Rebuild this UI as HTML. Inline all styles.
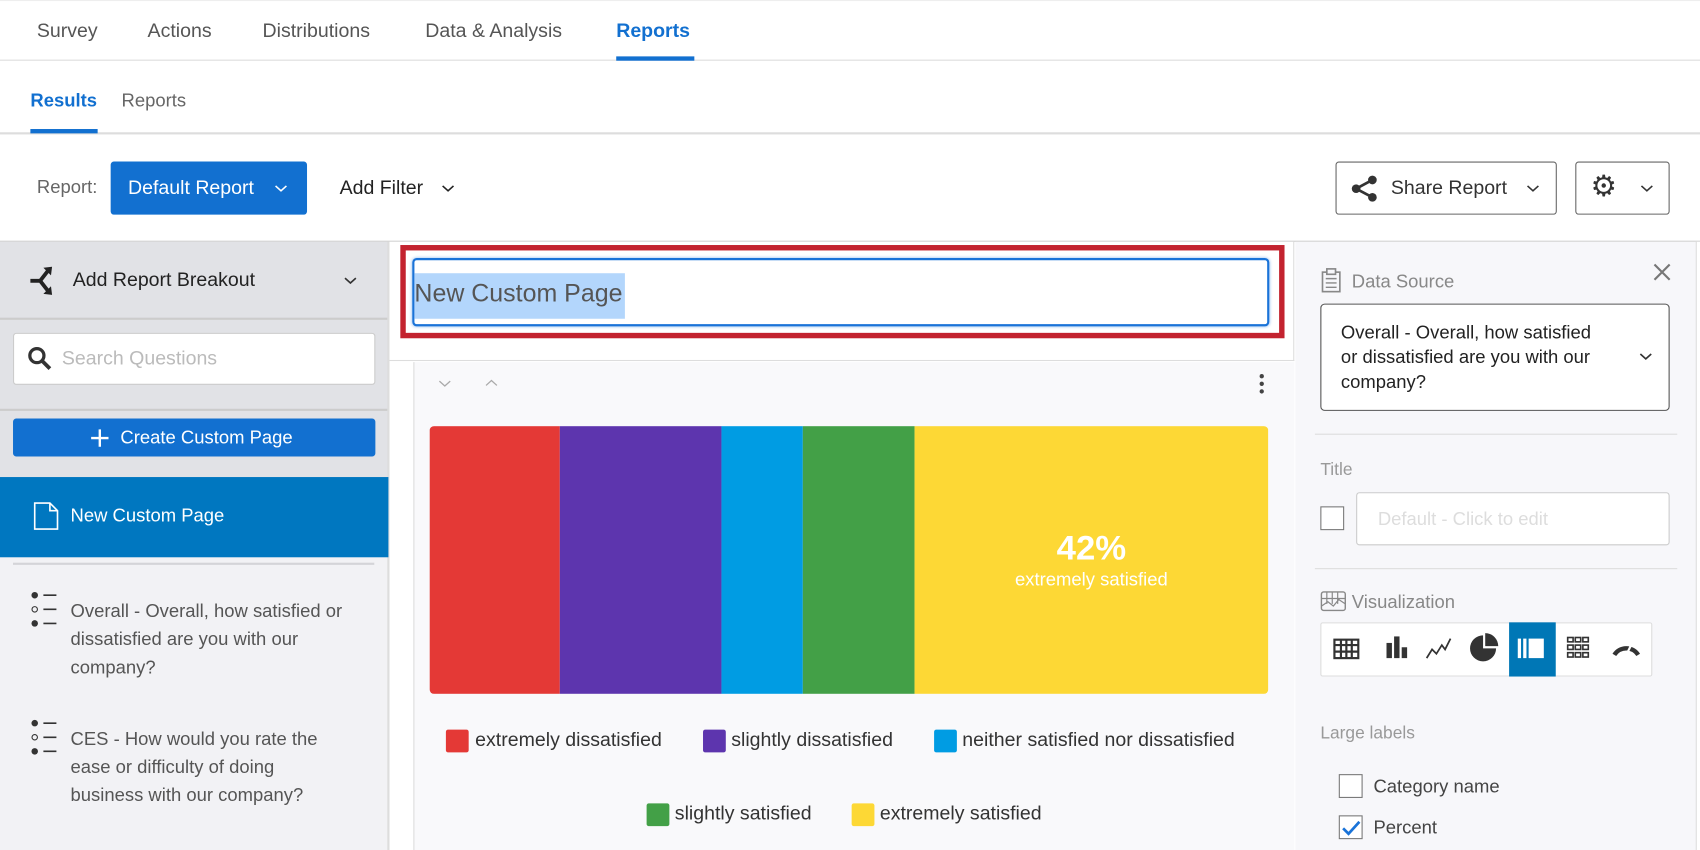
<!DOCTYPE html>
<html><head><meta charset="utf-8"><style>
*{box-sizing:border-box;margin:0;padding:0}
html,body{width:1700px;height:850px;overflow:hidden;background:#fff}
#w{position:absolute;left:0;top:0;width:1567px;height:784px;transform:scale(1.0849,1.0842);transform-origin:0 0;font-family:"Liberation Sans",sans-serif;color:#333}
.a{position:absolute}
.t{font-size:18px;color:#555;white-space:nowrap}
.cv{position:absolute;width:12px;height:8px}
</style></head><body><div id="w">
<div class="a" style="left:0;top:0;width:1567px;height:56px;border-bottom:1px solid #ddd;border-top:1px solid #eee"></div>
<div class="a t" style="left:34px;top:18px">Survey</div>
<div class="a t" style="left:136px;top:18px">Actions</div>
<div class="a t" style="left:242px;top:18px">Distributions</div>
<div class="a t" style="left:392px;top:18px">Data &amp; Analysis</div>
<div class="a t" style="left:568px;top:18px;color:#1270d0;font-weight:bold">Reports</div>
<div class="a" style="left:568px;top:52px;width:72px;height:4px;background:#1270d0"></div>
<div class="a" style="left:0;top:122px;width:1567px;height:2px;background:#ddd"></div>
<div class="a t" style="left:28px;top:83px;font-size:17px;color:#1270d0;font-weight:bold">Results</div>
<div class="a" style="left:28px;top:119px;width:62px;height:4px;background:#1270d0"></div>
<div class="a t" style="left:112px;top:83px;font-size:17px;color:#666">Reports</div>
<div class="a t" style="left:34px;top:163px;font-size:17px;color:#666">Report:</div>
<div class="a" style="left:102px;top:149px;width:181px;height:49px;background:#1270d0;border-radius:3px;color:#fff;font-size:18px;padding:14px 0 0 16px">Default Report</div>
<svg class="cv" style="left:253px;top:170px" viewBox="0 0 12 8"><path d="M1 1.5L6 6L11 1.5" stroke="#fff" stroke-width="1.5" fill="none"/></svg>
<div class="a t" style="left:313px;top:163px;color:#222">Add Filter</div>
<svg class="cv" style="left:407px;top:170px" viewBox="0 0 12 8"><path d="M1 1.5L6 6L11 1.5" stroke="#222" stroke-width="1.5" fill="none"/></svg>
<div class="a" style="left:1231px;top:149px;width:204px;height:49px;border:1px solid #666;border-radius:3px"></div>
<svg class="a" style="left:1244px;top:160px" width="28" height="28" viewBox="0 0 28 28"><g fill="#333"><circle cx="6" cy="14" r="4"/><circle cx="21" cy="6" r="4"/><circle cx="21" cy="22" r="4"/></g><path d="M6 14L21 6M6 14L21 22" stroke="#333" stroke-width="2.5"/></svg>
<div class="a t" style="left:1282px;top:163px;color:#333">Share Report</div>
<svg class="cv" style="left:1407px;top:170px" viewBox="0 0 12 8"><path d="M1 1.5L6 6L11 1.5" stroke="#333" stroke-width="1.5" fill="none"/></svg>
<div class="a" style="left:1452px;top:149px;width:87px;height:49px;border:1px solid #666;border-radius:3px"></div>
<div class="a" style="left:1466px;top:157px;font-size:27px;color:#333">&#9881;</div>
<svg class="cv" style="left:1512px;top:170px" viewBox="0 0 12 8"><path d="M1 1.5L6 6L11 1.5" stroke="#333" stroke-width="1.5" fill="none"/></svg>
<div class="a" style="left:0;top:222px;width:1567px;height:1px;background:#ccc"></div>
<div class="a" style="left:0;top:223px;width:358px;height:217px;background:#e1e2e6"></div>
<div class="a" style="left:0;top:440px;width:358px;height:344px;background:#f2f2f5"></div>
<div class="a" style="left:357px;top:223px;width:2px;height:561px;background:#ddd"></div>
<div class="a" style="left:0;top:293px;width:357px;height:2px;background:#ccc"></div>
<div class="a" style="left:0;top:377px;width:357px;height:2px;background:#ccc"></div>
<svg class="a" style="left:26px;top:244px" width="30" height="30" viewBox="0 0 30 30"><path d="M2 15H11L18 6M11 15L18 24" stroke="#222" stroke-width="3.5" fill="none"/><path d="M14 3L22 2L21 10Z M14 27L22 28L21 20Z" fill="#222"/></svg>
<div class="a t" style="left:67px;top:248px;color:#222">Add Report Breakout</div>
<svg class="cv" style="left:317px;top:255px" viewBox="0 0 12 8"><path d="M1 1.5L6 6L11 1.5" stroke="#333" stroke-width="1.5" fill="none"/></svg>
<div class="a" style="left:12px;top:307px;width:334px;height:48px;background:#fff;border:1px solid #ccc;border-radius:3px"></div>
<svg class="a" style="left:25px;top:319px" width="24" height="24" viewBox="0 0 24 24"><circle cx="9" cy="9" r="6.5" stroke="#333" stroke-width="3" fill="none"/><path d="M14 14L21 21" stroke="#333" stroke-width="3.5"/></svg>
<div class="a t" style="left:57px;top:320px;color:#bbb">Search Questions</div>
<div class="a" style="left:12px;top:386px;width:334px;height:35px;background:#1270d0;border-radius:3px"></div>
<svg class="a" style="left:83px;top:395px" width="18" height="18"><path d="M9 1V17M1 9H17" stroke="#fff" stroke-width="2.2"/></svg>
<div class="a t" style="left:111px;top:394px;font-size:17px;color:#fff">Create Custom Page</div>
<div class="a" style="left:0;top:440px;width:358px;height:74px;background:#0077c0"></div>
<svg class="a" style="left:30px;top:462px" width="26" height="28" viewBox="0 0 26 28"><path d="M2 2H16L23 9V26H2Z" fill="none" stroke="#fff" stroke-width="1.5"/><path d="M16 2V9H23" fill="none" stroke="#fff" stroke-width="1.5"/></svg>
<div class="a t" style="left:65px;top:466px;color:#fff;font-size:17px">New Custom Page</div>
<div class="a" style="left:12px;top:519px;width:333px;height:2px;background:#d4d4d8"></div>
<svg class="a" style="left:26px;top:545px" width="34" height="36" viewBox="0 0 34 36"><circle cx="6" cy="4" r="3" fill="#333"/><circle cx="6" cy="17" r="2.5" fill="none" stroke="#333"/><circle cx="6" cy="30" r="3" fill="#333"/><path d="M14 4H26M14 17H26M14 30H26" stroke="#333" stroke-width="1.5"/></svg>
<div class="a" style="left:65px;top:551px;font-size:17px;line-height:26px;color:#555;width:270px">Overall - Overall, how satisfied or dissatisfied are you with our company?</div>
<svg class="a" style="left:26px;top:663px" width="34" height="36" viewBox="0 0 34 36"><circle cx="6" cy="4" r="3" fill="#333"/><circle cx="6" cy="17" r="2.5" fill="none" stroke="#333"/><circle cx="6" cy="30" r="3" fill="#333"/><path d="M14 4H26M14 17H26M14 30H26" stroke="#333" stroke-width="1.5"/></svg>
<div class="a" style="left:65px;top:669px;font-size:17px;line-height:26px;color:#555;width:250px">CES - How would you rate the ease or difficulty of doing business with our company?</div>
<div class="a" style="left:359px;top:223px;width:834px;height:110px;border-right:1px solid #ddd;border-bottom:1px solid #ddd;background:#fff"></div>
<div class="a" style="left:369px;top:226px;width:815px;height:86px;border:5px solid #c3232f"></div>
<div class="a" style="left:380px;top:238px;width:790px;height:63px;border:2px solid #1a73d8;border-radius:4px;box-shadow:0 0 3px #8cb8ee"></div>
<div class="a" style="left:382px;top:252px;height:42px;background:#b3d6fc;font-size:23px;color:#555;padding:5px 2px 0 0">New Custom Page</div>
<div class="a" style="left:381px;top:334px;width:812px;height:450px;background:#f9f9fb;border-left:1px solid #ddd"></div>
<svg class="cv" style="left:404px;top:350px" viewBox="0 0 12 8"><path d="M1 1.5L6 6L11 1.5" stroke="#aaa" stroke-width="1.2" fill="none"/></svg>
<svg class="cv" style="left:447px;top:349px" viewBox="0 0 12 8"><path d="M1 6.5L6 2L11 6.5" stroke="#aaa" stroke-width="1.2" fill="none"/></svg>
<div class="a" style="left:1161px;top:345px;width:4px;height:4px;border-radius:2px;background:#444;box-shadow:0 7px 0 #444,0 14px 0 #444"></div>
<div class="a" style="left:396px;top:393px;width:773px;height:247px;border-radius:4px;overflow:hidden;display:flex">
<div style="width:120px;background:#e43936"></div><div style="width:149px;background:#5d35ae"></div><div style="width:75px;background:#009ce3"></div><div style="width:103px;background:#43a047"></div><div style="flex:1;background:#fdd835"></div></div>
<div class="a" style="left:843px;top:487px;width:326px;text-align:center;color:#fff;font-size:32px;font-weight:bold">42%</div>
<div class="a" style="left:843px;top:525px;width:326px;text-align:center;color:#fff;font-size:17px">extremely satisfied</div>
<div class="a" style="left:411px;top:673px;width:21px;height:21px;border-radius:2px;background:#e43936"></div>
<div class="a t" style="left:438px;top:672px;color:#333">extremely dissatisfied</div>
<div class="a" style="left:648px;top:673px;width:21px;height:21px;border-radius:2px;background:#5d35ae"></div>
<div class="a t" style="left:674px;top:672px;color:#333">slightly dissatisfied</div>
<div class="a" style="left:861px;top:673px;width:21px;height:21px;border-radius:2px;background:#009ce3"></div>
<div class="a t" style="left:887px;top:672px;color:#333">neither satisfied nor dissatisfied</div>
<div class="a" style="left:596px;top:741px;width:21px;height:21px;border-radius:2px;background:#43a047"></div>
<div class="a t" style="left:622px;top:740px;color:#333">slightly satisfied</div>
<div class="a" style="left:785px;top:741px;width:21px;height:21px;border-radius:2px;background:#fdd835"></div>
<div class="a t" style="left:811px;top:740px;color:#333">extremely satisfied</div>
<div class="a" style="left:1194px;top:223px;width:373px;height:561px;background:#f7f7fa"></div>
<div class="a" style="left:1563px;top:223px;width:4px;height:561px;background:#fff;border-left:1px solid #ddd"></div>
<svg class="a" style="left:1217px;top:247px" width="20" height="24" viewBox="0 0 20 24"><rect x="2" y="4" width="16" height="18" fill="none" stroke="#888" stroke-width="1.5"/><rect x="6" y="1" width="8" height="5" fill="#f7f7fa" stroke="#888" stroke-width="1.5"/><path d="M5 10H15M5 14H15M5 18H15" stroke="#888" stroke-width="1.3"/></svg>
<div class="a t" style="left:1246px;top:250px;font-size:17px;color:#888">Data Source</div>
<svg class="a" style="left:1524px;top:243px" width="16" height="16"><path d="M1 1L15 15M15 1L1 15" stroke="#777" stroke-width="2"/></svg>
<div class="a" style="left:1217px;top:280px;width:322px;height:99px;border:1px solid #555;border-radius:4px;background:#fff;font-size:17px;line-height:23px;color:#222;padding:14px 52px 0 18px">Overall - Overall, how satisfied or dissatisfied are you with our company?</div>
<svg class="cv" style="left:1511px;top:325px" viewBox="0 0 12 8"><path d="M1 1.5L6 6L11 1.5" stroke="#333" stroke-width="1.5" fill="none"/></svg>
<div class="a" style="left:1212px;top:400px;width:334px;height:1px;background:#ddd"></div>
<div class="a t" style="left:1217px;top:425px;font-size:16px;color:#999">Title</div>
<div class="a" style="left:1217px;top:467px;width:22px;height:22px;border:1px solid #777;background:#fff"></div>
<div class="a" style="left:1250px;top:454px;width:289px;height:49px;border:1px solid #ccc;border-radius:3px;background:#fff;font-size:17px;color:#ddd;padding:14px 0 0 19px">Default - Click to edit</div>
<div class="a" style="left:1212px;top:524px;width:334px;height:1px;background:#ddd"></div>
<svg class="a" style="left:1217px;top:545px" width="24" height="20" viewBox="0 0 24 20"><rect x="1" y="1" width="22" height="17" rx="2" fill="none" stroke="#888" stroke-width="1.3"/><path d="M1 7H23M6 1V12M11 1V12M16 1V12M1 14L7 10L12 14L17 8L23 12" stroke="#888" stroke-width="1.1" fill="none"/></svg>
<div class="a t" style="left:1246px;top:546px;font-size:17px;color:#888">Visualization</div>
<div class="a" style="left:1217px;top:574px;width:306px;height:50px;border:1px solid #ddd;background:#fff;border-radius:2px"></div>
<div class="a" style="left:1391px;top:574px;width:43px;height:50px;background:#0077b6"></div>
<svg class="a" style="left:1217px;top:574px" width="306" height="50" viewBox="0 0 306 50">
<g fill="none" stroke="#333" stroke-width="2"><rect x="13" y="16" width="22" height="17"/><path d="M13 21H35M13 27H35M19 16V33M24 16V33M29 16V33"/></g>
<g fill="#333"><rect x="61" y="19" width="5" height="14"/><rect x="68" y="13" width="5" height="20"/><rect x="75" y="23" width="5" height="10"/></g>
<path d="M98 33L103 25L107 29L112 21L115 25L120 15" stroke="#333" stroke-width="1.6" fill="none"/>
<path d="M150 12A12 12 0 1 0 162 24H150Z" fill="#333"/><path d="M152 10A12 12 0 0 1 164 22H152Z" fill="#333"/>
<g fill="#fff"><rect x="182" y="15" width="3" height="18"/><rect x="187" y="15" width="3" height="18"/><rect x="192" y="15" width="14" height="18"/></g>
<g fill="none" stroke="#333" stroke-width="1.5"><rect x="228" y="14" width="5" height="4"/><rect x="235" y="14" width="5" height="4"/><rect x="242" y="14" width="5" height="4"/><rect x="228" y="21" width="5" height="4"/><rect x="235" y="21" width="5" height="4"/><rect x="242" y="21" width="5" height="4"/><rect x="228" y="28" width="5" height="4"/><rect x="235" y="28" width="5" height="4"/><rect x="242" y="28" width="5" height="4"/></g>
<path d="M271 30A13 13 0 0 1 293 30" stroke="#333" stroke-width="4" fill="none"/><path d="M282 30L287 20" stroke="#fff" stroke-width="2"/>
</svg>
<div class="a t" style="left:1217px;top:668px;font-size:16px;color:#999">Large labels</div>
<div class="a" style="left:1234px;top:714px;width:22px;height:22px;border:1px solid #777;background:#fff"></div>
<div class="a t" style="left:1266px;top:716px;font-size:17px;color:#444">Category name</div>
<div class="a" style="left:1234px;top:752px;width:22px;height:22px;border:1px solid #777;background:#fff"></div>
<svg class="a" style="left:1234px;top:752px" width="22" height="22"><path d="M4 12L9 17L19 6" stroke="#1a73d8" stroke-width="2.5" fill="none"/></svg>
<div class="a t" style="left:1266px;top:754px;font-size:17px;color:#444">Percent</div>
</div></body></html>
